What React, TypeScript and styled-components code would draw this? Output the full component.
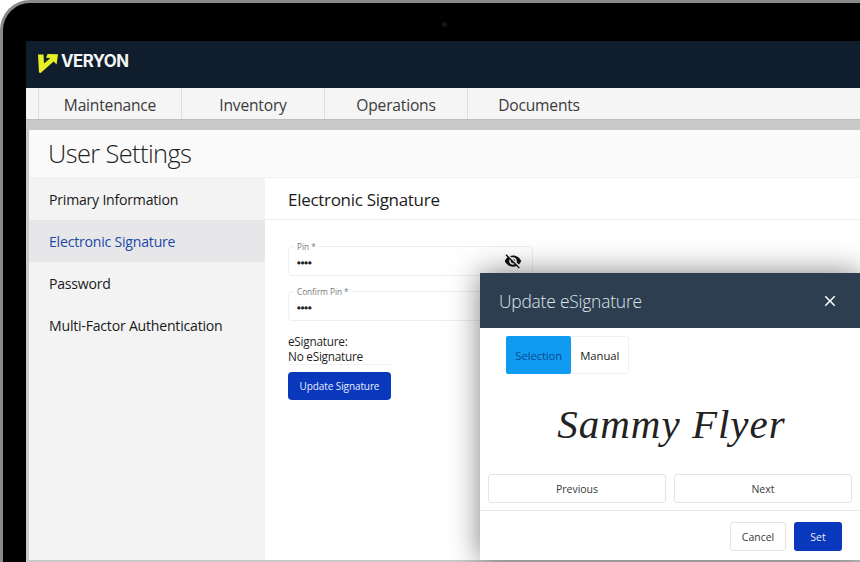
import React from "react";
import styled, { createGlobalStyle } from "styled-components";
import { MdVisibilityOff, MdClose } from "react-icons/md";

const Global = createGlobalStyle`
  html, body { margin: 0; padding: 0; background: #fff; }
  * { box-sizing: border-box; }
  body { font-family: "Open Sans", "Noto Sans", sans-serif; }
`;

const Page = styled.div`
  width: 860px; height: 562px; overflow: hidden; background: #fff;
`;
const Laptop = styled.div`
  width: 880px; height: 562px; background: #000;
  border: 3px solid #8a8a8a; border-right: 0; border-bottom: 0;
  border-radius: 30px 0 0 0;
  display: flex; flex-direction: column;
  padding-left: 23px;
`;
const CameraBar = styled.div`
  height: 38px; flex: none; display: flex; justify-content: center; align-items: center;
`;
const Camera = styled.span`
  width: 5px; height: 5px; border-radius: 50%; background: #141414;
  margin: 4px 0 0 -18px;
`;
const Screen = styled.div`
  flex: 1; display: flex; flex-direction: column; background: #c9c9c9; position: relative;
`;
const Brand = styled.header`
  height: 47px; flex: none; background: #101d2c; display: flex; align-items: center;
  padding: 0 0 4px 12px; gap: 3px;
`;
const BrandName = styled.span`
  font-family: "Inter", "Liberation Sans", sans-serif; font-weight: 700; font-size: 16.8px;
  letter-spacing: -0.5px; color: #f4f6f6; margin-bottom: 4px;
`;
const Nav = styled.nav`
  height: 32px; flex: none; background: #f5f5f5; display: flex; padding-left: 12px;
  border-bottom: 1px solid #bdbdbd;
`;
const NavItem = styled.div<{ $w: number }>`
  width: ${(p) => p.$w}px; display: flex; align-items: center; justify-content: center;
  border-left: 1px solid #dedede; font-size: 15.6px; color: #3b3b3b; letter-spacing: -0.2px;
  padding-top: 2px;
`;
const Content = styled.main`
  margin: 10px 0 2px 3px; flex: 1; display: flex; flex-direction: column; background: #fff; width: 848px;
`;
const Title = styled.h1`
  margin: 0; height: 48px; flex: none; padding: 0 0 2px 19px; display: flex; align-items: center;
  background: #fafafa; font-weight: 300; font-size: 25.4px; color: #222; letter-spacing: -0.6px;
  border-bottom: 1px solid #f0f0f0;
`;
const Columns = styled.div`
  display: flex; flex: 1;
`;
const Sidebar = styled.aside`
  width: 236px; flex: none; background: #f3f3f4;
`;
const SideItem = styled.div<{ $active?: boolean }>`
  height: 42px; display: flex; align-items: center; padding: 1px 0 0 20px;
  font-size: 14.1px; letter-spacing: -0.22px;
  color: ${(p) => (p.$active ? "#1c48a8" : "#1a1a1a")};
  background: ${(p) => (p.$active ? "#e7e7e9" : "transparent")};
`;
const Panel = styled.section`
  flex: 1; background: #fff;
`;
const PanelHead = styled.h2`
  margin: 0; height: 42px; display: flex; align-items: center; padding: 2px 0 0 23px;
  font-weight: 400; font-size: 17px; letter-spacing: -0.3px; color: #1c1c1c; border-bottom: 1px solid #efefef;
`;
const Form = styled.div`
  padding: 26px 0 0 23px; display: flex; flex-direction: column;
`;
const Field = styled.div`
  width: 245px; height: 30px; border: 1px solid #efefef; border-radius: 4px;
  display: flex; align-items: center; justify-content: space-between;
  padding: 0 10px 0 8px; margin-bottom: 15px; position: relative; color: #222;
`;
const FieldLabel = styled.label`
  position: absolute; top: -6px; left: 5px; background: #fff; padding: 0 3px;
  font-size: 8.2px; line-height: 11px; color: #777;
`;
const Dots = styled.span`
  font-size: 4.2px; color: #222; font-family: "DejaVu Sans", sans-serif; font-weight: 700; padding-top: 2px;
`;
const InfoBlock = styled.div`
  margin-top: -2px; width: 103px; border-bottom: 1px solid #f2f2f2;
`;
const InfoLine = styled.div`
  font-size: 11.8px; line-height: 15px; color: #1f1f1f; letter-spacing: -0.25px; white-space: nowrap;
`;
const PrimaryButton = styled.button`
  border: 0; border-radius: 4px; background: #0a38bd; color: #e6ecfa; font-family: inherit;
  font-size: 10px; letter-spacing: -0.1px; padding: 0; width: 103px; height: 28px; margin-top: 7px;
`;
const Modal = styled.div`
  position: absolute; left: 454px; top: 232px; width: 380px; height: 287px; background: #fff;
  box-shadow: 0 0 28px rgba(0, 0, 0, 0.5);
  display: flex; flex-direction: column;
`;
const ModalHead = styled.div`
  height: 55px; flex: none; background: #2c3e50; display: flex; align-items: center;
  justify-content: space-between; padding: 0 21px 0 19px; color: #dfe6ea;
  font-size: 17.4px; font-weight: 300; letter-spacing: -0.2px;
`;
const Tabs = styled.div`
  display: flex; margin: 8px 0 0 26px; width: 123px; height: 38px;
  border: 1px solid #f0f0f0; border-radius: 3px;
`;
const Tab = styled.div<{ $active?: boolean; $w: number }>`
  width: ${(p) => p.$w}px; display: flex; align-items: center; justify-content: center;
  font-size: 11.3px; letter-spacing: -0.1px; border-radius: 2px;
  margin: ${(p) => (p.$active ? "-1px 0 -1px -1px" : "0")};
  background: ${(p) => (p.$active ? "#0f9bf2" : "#fff")};
  color: ${(p) => (p.$active ? "#0f4a8f" : "#222")};
`;
const Signature = styled.div`
  height: 100px; flex: none; display: flex; align-items: center; justify-content: center;
  font-family: "Liberation Serif", serif; font-style: italic; font-size: 41px; color: #222;
  letter-spacing: 1px; padding: 0 0 0 3px;
`;
const Pager = styled.div`
  display: flex; gap: 8px; padding: 0 8px;
`;
const PagerButton = styled.button`
  width: 178.5px; height: 29px; border: 1px solid #e4e4e4; border-radius: 3px; background: #fff;
  font-family: inherit; font-size: 10.5px; color: #3a3a3a;
`;
const Footer = styled.div`
  margin-top: 7px; border-top: 1px solid #e9e9e9; display: flex; justify-content: flex-end;
  padding: 11px 18px 0 0; gap: 8px; flex: 1;
`;
const GhostButton = styled.button`
  width: 56px; height: 29px; border: 1px solid #e4e4e4; border-radius: 3px; background: #fff;
  font-family: inherit; font-size: 10.5px; color: #3a3a3a;
`;
const SetButton = styled.button`
  width: 48px; height: 29px; border: 0; border-radius: 3px; background: #0a38bd;
  font-family: inherit; font-size: 10.5px; color: #e6ecfa;
`;

const Logo = () => (
  <svg width="20" height="21" viewBox="0 0 20 21" aria-hidden="true">
    <path
      d="M0 2.6 L5.5 2.6 L6 11.4 L12.4 5.9 L8 5.8 L9.6 2 L20 2.2 L18.6 12.6 L15.6 9.6 L2.6 21 L1 20.4 Z"
      fill="#e7f024"
    />
  </svg>
);

export default function App() {
  return (
    <Page>
      <Global />
      <Laptop>
        <CameraBar>
          <Camera />
        </CameraBar>
        <Screen>
          <Brand>
            <Logo />
            <BrandName>VERYON</BrandName>
          </Brand>
          <Nav>
            <NavItem $w={143}>Maintenance</NavItem>
            <NavItem $w={143}>Inventory</NavItem>
            <NavItem $w={143}>Operations</NavItem>
            <NavItem $w={143}>Documents</NavItem>
          </Nav>
          <Content>
            <Title>User Settings</Title>
            <Columns>
              <Sidebar>
                <SideItem>Primary Information</SideItem>
                <SideItem $active>Electronic Signature</SideItem>
                <SideItem>Password</SideItem>
                <SideItem>Multi-Factor Authentication</SideItem>
              </Sidebar>
              <Panel>
                <PanelHead>Electronic Signature</PanelHead>
                <Form>
                  <Field>
                    <FieldLabel>Pin *</FieldLabel>
                    <Dots>●●●●</Dots>
                    <MdVisibilityOff size={18} color="#111" />
                  </Field>
                  <Field>
                    <FieldLabel>Confirm Pin *</FieldLabel>
                    <Dots>●●●●</Dots>
                  </Field>
                  <InfoBlock>
                    <InfoLine>eSignature:</InfoLine>
                    <InfoLine>No eSignature</InfoLine>
                  </InfoBlock>
                  <PrimaryButton>Update Signature</PrimaryButton>
                </Form>
              </Panel>
            </Columns>
          </Content>
          <Modal>
            <ModalHead>
              Update eSignature
              <MdClose size={18} color="#fff" />
            </ModalHead>
            <Tabs>
              <Tab $active $w={66}>Selection</Tab>
              <Tab $w={57}>Manual</Tab>
            </Tabs>
            <Signature>Sammy Flyer</Signature>
            <Pager>
              <PagerButton>Previous</PagerButton>
              <PagerButton>Next</PagerButton>
            </Pager>
            <Footer>
              <GhostButton>Cancel</GhostButton>
              <SetButton>Set</SetButton>
            </Footer>
          </Modal>
        </Screen>
      </Laptop>
    </Page>
  );
}
